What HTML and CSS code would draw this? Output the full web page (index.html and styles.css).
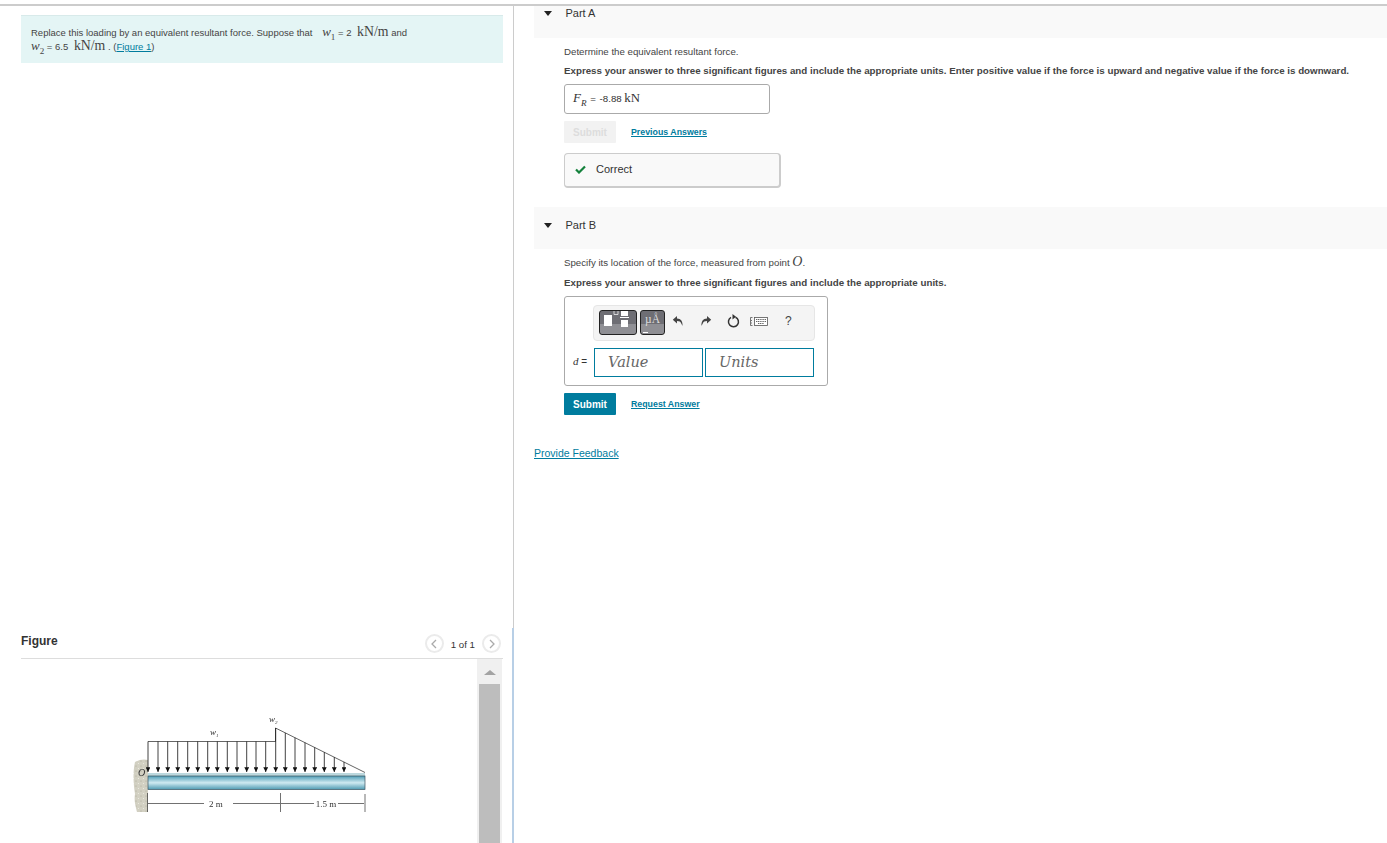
FILE: index.html
```html
<!DOCTYPE html>
<html lang="en">
<head>
    <meta charset="UTF-8">
    <title>Equivalent Resultant Force</title>
    <link rel="stylesheet" href="styles.css">
</head>
<body>
    <div class="page">
        <!-- Left column: problem text and figure -->
        <div class="left">
            <div class="intro">
                Replace this loading by an equivalent resultant force. Suppose that <i class="math math-gap">w<sub>1</sub></i> = 2 <span class="unit">kN/m</span> and<br>
                <i class="math">w<sub>2</sub></i> = 6.5 <span class="unit">kN/m</span> . (<a href="#">Figure 1</a>)
            </div>
            <div class="figure-head">
                <span class="figure-title">Figure</span>
                <div class="pager">
                    <span class="pager-btn">
                        <svg width="8" height="10" viewBox="0 0 8 10"><path d="M6 1 2 5l4 4" fill="none" stroke="#aaa" stroke-width="1.3"/></svg>
                    </span>
                    <span class="pager-text">1 of 1</span>
                    <span class="pager-btn">
                        <svg width="8" height="10" viewBox="0 0 8 10"><path d="M2 1l4 4-4 4" fill="none" stroke="#aaa" stroke-width="1.3"/></svg>
                    </span>
                </div>
            </div>
            <div class="figure-body">
                <div class="figure-img">
                    <svg width="250" height="120" viewBox="0 0 250 120">
                        <defs>
                            <linearGradient id="beam" x1="0" y1="0" x2="0" y2="1">
                                <stop offset="0" stop-color="#4f9db6"/>
                                <stop offset="0.5" stop-color="#cfeaf1"/>
                                <stop offset="1" stop-color="#4f9bb3"/>
                            </linearGradient>
                            <marker id="tip" markerWidth="6" markerHeight="6" viewBox="0 0 4 4" refX="4" refY="2" orient="auto">
                                <path d="M0 0 4 2 0 4z" fill="#111"/>
                            </marker>
                            <pattern id="rock" width="5" height="5" patternUnits="userSpaceOnUse">
                                <rect width="5" height="5" fill="#d2d0c2"/>
                                <circle cx="1" cy="1" r="0.6" fill="#a9a797"/>
                                <circle cx="3.5" cy="3.5" r="0.6" fill="#efeee4"/>
                            </pattern>
                        </defs>
                        <path d="M15 62c5-3 10-3 13-2v52H17c-2-8-3-12-2-18-2-12-2-24 0-32z" fill="url(#rock)"/>
                        <rect x="28" y="73" width="217" height="3" fill="#bcd8de"/>
                        <rect x="28" y="76" width="217" height="13.5" fill="url(#beam)" stroke="#3c5560" stroke-width="0.7"/>
                        <path d="M28 41.5H155.5V28L245 72.5" fill="none" stroke="#222" stroke-width="0.7"/>
                        <g stroke="#111" stroke-width="0.8">
                            <line x1="28" y1="41.5" x2="28" y2="72" marker-end="url(#tip)"/>
                            <line x1="38" y1="41.5" x2="38" y2="72" marker-end="url(#tip)"/>
                            <line x1="47.7" y1="41.5" x2="47.7" y2="72" marker-end="url(#tip)"/>
                            <line x1="57.7" y1="41.5" x2="57.7" y2="72" marker-end="url(#tip)"/>
                            <line x1="67.7" y1="41.5" x2="67.7" y2="72" marker-end="url(#tip)"/>
                            <line x1="77.7" y1="41.5" x2="77.7" y2="72" marker-end="url(#tip)"/>
                            <line x1="87.7" y1="41.5" x2="87.7" y2="72" marker-end="url(#tip)"/>
                            <line x1="97.3" y1="41.5" x2="97.3" y2="72" marker-end="url(#tip)"/>
                            <line x1="107.3" y1="41.5" x2="107.3" y2="72" marker-end="url(#tip)"/>
                            <line x1="117" y1="41.5" x2="117" y2="72" marker-end="url(#tip)"/>
                            <line x1="126.7" y1="41.5" x2="126.7" y2="72" marker-end="url(#tip)"/>
                            <line x1="136" y1="41.5" x2="136" y2="72" marker-end="url(#tip)"/>
                            <line x1="145.7" y1="41.5" x2="145.7" y2="72" marker-end="url(#tip)"/>
                            <line x1="155.7" y1="28" x2="155.7" y2="72" marker-end="url(#tip)"/>
                            <line x1="165.3" y1="32.9" x2="165.3" y2="72" marker-end="url(#tip)"/>
                            <line x1="175" y1="37.7" x2="175" y2="72" marker-end="url(#tip)"/>
                            <line x1="185" y1="42.6" x2="185" y2="72" marker-end="url(#tip)"/>
                            <line x1="194.7" y1="47.4" x2="194.7" y2="72" marker-end="url(#tip)"/>
                            <line x1="204.3" y1="52.2" x2="204.3" y2="72" marker-end="url(#tip)"/>
                            <line x1="214.3" y1="57.1" x2="214.3" y2="72" marker-end="url(#tip)"/>
                            <line x1="224" y1="61.9" x2="224" y2="72" marker-end="url(#tip)"/>
                        </g>
                        <g stroke="#333" stroke-width="0.7" fill="none">
                            <path d="M27.5 93v19M160.5 93v19M245 94v18"/>
                            <path d="M28 103.5H84M113 103.5H160M161 103.5H194M218 103.5H244"/>
                        </g>
                        <g class="dia-text">
                            <text x="90" y="35" class="dia-var">w<tspan dy="2" font-size="5">1</tspan></text>
                            <text x="149" y="22" class="dia-var">w<tspan dy="2" font-size="5">2</tspan></text>
                            <text x="18" y="76" class="dia-o">O</text>
                            <text x="96" y="107" text-anchor="middle">2 m</text>
                            <text x="206" y="107" text-anchor="middle">1.5 m</text>
                        </g>
                    </svg>
                </div>
                <div class="scrollbar">
                    <div class="scroll-up"></div>
                    <div class="scroll-thumb"></div>
                </div>
            </div>
        </div>

        <!-- Right column: parts -->
        <div class="right">
            <div class="part-head part-head-a">
                <span class="caret"></span>
                <span class="part-title">Part A</span>
            </div>
            <div class="part-body">
                <p class="prompt">Determine the equivalent resultant force.</p>
                <p class="instr">Express your answer to three significant figures and include the appropriate units. Enter positive value if the force is upward and negative value if the force is downward.</p>
                <div class="answer-box">
                    <i class="math math-f">F<sub>R</sub></i> <span class="eq">=</span> -8.88 <span class="unit">kN</span>
                </div>
                <div class="actions">
                    <button class="btn btn-off">Submit</button>
                    <a href="#" class="action-link">Previous Answers</a>
                </div>
                <div class="correct">
                    <svg width="11" height="9" viewBox="0 0 11 9"><path d="M1 4.5 4 7.5 10 1.5" fill="none" stroke="#14813c" stroke-width="2.2"/></svg>
                    <span>Correct</span>
                </div>
            </div>

            <div class="part-head part-head-b">
                <span class="caret"></span>
                <span class="part-title">Part B</span>
            </div>
            <div class="part-body">
                <p class="prompt prompt-b">Specify its location of the force, measured from point <i class="math big">O</i>.</p>
                <p class="instr">Express your answer to three significant figures and include the appropriate units.</p>
                <div class="editor">
                    <div class="toolbar">
                        <span class="tool tool-wide">
                            <svg width="36" height="23" viewBox="0 0 36 23">
                                <rect x="4" y="4" width="8" height="11" fill="#fff"/>
                                <path d="M14 0v3.5h4V0" fill="none" stroke="#eee" stroke-width="0.8"/>
                                <rect x="21" y="0" width="7" height="5" fill="#fff"/>
                                <rect x="20" y="6" width="9" height="1" fill="#fff"/>
                                <rect x="21" y="9" width="7" height="7" fill="#fff"/>
                            </svg>
                        </span>
                        <span class="tool tool-unit">µÅ</span>
                        <svg class="icon icon-undo" width="12" height="12" viewBox="0 0 12 12"><path d="M5 1 .8 4.8 5 8.5V6c2.2 0 3.700.6 4.500 3 .6 1 .9 1.800 1 2 .4-4.600-1.500-7.400-5.500-7.500z" fill="#444"/></svg>
                        <svg class="icon icon-redo" width="12" height="12" viewBox="0 0 12 12"><path d="M7 1l4.200 3.800L7 8.500V6c-2.200 0-3.700.6-4.500 3-.6 1-.9 1.800-1 2C1.100 6.400 3 3.600 7 3.500z" fill="#444"/></svg>
                        <svg class="icon icon-reset" width="13" height="14" viewBox="0 0 13 14"><path d="M4 3.400a5 5 0 1 0 4.500-.2" fill="none" stroke="#333" stroke-width="1.5"/><path d="M5.500 0v5.500L9 2.700z" fill="#333"/></svg>
                        <svg class="icon icon-keys" width="18" height="9" viewBox="0 0 18 9">
                            <path d="M2.500.5H.5v8h2M1.500 3v1M1.500 5.500v1" fill="none" stroke="#555" stroke-width="0.8"/>
                            <rect x="4.5" y="0.5" width="13" height="8" fill="#fff" stroke="#555" stroke-width="0.8"/>
                            <path d="M6 2.500h10M6 4.500h10M8 6.500h6" stroke="#666" stroke-width="1.1" stroke-dasharray="1.2 .6"/>
                        </svg>
                        <span class="help">?</span>
                    </div>
                    <div class="input-row">
                        <span class="var"><i class="math">d</i> =</span>
                        <span class="field">Value</span>
                        <span class="field">Units</span>
                    </div>
                </div>
                <div class="actions actions-b">
                    <button class="btn btn-on">Submit</button>
                    <a href="#" class="action-link">Request Answer</a>
                </div>
            </div>
            <a href="#" class="feedback">Provide Feedback</a>
        </div>
    </div>
</body>
</html>
```

FILE: styles.css
```css
* {
    box-sizing: border-box;
}
html, body {
    margin: 0;
    height: 100%;
    overflow: hidden;
}
body {
    font-family: "Liberation Sans", Arial, sans-serif;
    font-size: 9.7px;
    color: #333;
    background-color: #fff;
    padding-top: 4px;
}
a {
    color: #007c9e;
    text-decoration: underline;
}
p {
    margin: 0;
}
sub {
    font-size: 70%;
    font-style: normal;
    line-height: 0;
}
.math {
    font-family: "Liberation Serif", serif;
    font-size: 13px;
}
.math.big {
    font-size: 14px;
}
.math-f sub {
    font-style: italic;
}
.unit {
    font-family: "Liberation Serif", serif;
    font-size: 12.8px;
}
.page {
    display: flex;
    height: 839px;
    border-top: 2px solid #ccc;
}

/* left column */
.left {
    width: 514px;
    flex-shrink: 0;
    padding: 9px 10px 0 21px;
    border-right: 1px solid #ccc;
    display: flex;
    flex-direction: column;
}
.intro {
    flex-shrink: 0;
    height: 48px;
    padding: 9px 10px 0;
    font-size: 9.5px;
    background-color: #e4f5f5;
    border-top: 1px solid #d8eaea;
    line-height: 13px;
    color: #444;
}
.math-gap {
    margin-left: 7px;
}
.intro .unit {
    margin-left: 3px;
    font-size: 13.8px;
}
.figure-head {
    flex-shrink: 0;
    display: flex;
    justify-content: space-between;
    align-items: flex-end;
    margin-top: 566px;
    height: 30px;
    padding-bottom: 5px;
    border-bottom: 1px solid #ddd;
}
.figure-title {
    margin-bottom: 5px;
    font-size: 12px;
    font-weight: bold;
    color: #333;
}
.pager {
    display: flex;
    align-items: center;
    gap: 7px;
    padding-right: 2px;
}
.pager-btn {
    width: 19px;
    height: 19px;
    border: 2px solid #ebebeb;
    border-radius: 50%;
    display: flex;
    align-items: center;
    justify-content: center;
}
.pager-text {
    padding-top: 2px;
    font-size: 9.7px;
}
.figure-body {
    display: flex;
    flex: 1;
    min-height: 0;
}
.figure-img {
    width: 456px;
    padding: 41px 0 0 99px;
}
.figure-img svg {
    filter: blur(0.4px);
}
.dia-text {
    font-family: "Liberation Serif", serif;
    font-size: 9px;
    fill: #333;
}
.dia-var {
    font-style: italic;
}
.dia-o {
    font-style: italic;
    font-size: 10px;
}
.scrollbar {
    width: 25px;
    padding: 0 2px;
    background-color: #f0f0f0;
}
.scroll-up {
    width: 0;
    height: 0;
    margin: 11px auto 9px;
    border-left: 6px solid transparent;
    border-right: 6px solid transparent;
    border-bottom: 5px solid #a3a3a3;
}
.scroll-thumb {
    height: 170px;
    background-color: #bdbdbd;
}

/* right column */
.right {
    flex: 1;
    padding-left: 20px;
    position: relative;
}
.right::before {
    content: "";
    position: absolute;
    left: -2px;
    top: 622px;
    bottom: 0;
    width: 2px;
    background-color: #b8cfe6;
}
.part-head {
    background-color: #f9f9f9;
    display: flex;
    padding-left: 10px;
    font-size: 11px;
    color: #333;
}
.part-head-a {
    height: 32px;
    padding-top: 1px;
}
.part-head-b {
    height: 42px;
    margin-top: 19px;
    padding-top: 12px;
}
.caret {
    width: 0;
    height: 0;
    margin-top: 4px;
    border-left: 4px solid transparent;
    border-right: 4px solid transparent;
    border-top: 5px solid #222;
}
.part-title {
    margin-left: 13.5px;
}
.part-body {
    padding-left: 30px;
}
.prompt {
    padding-top: 8px;
    height: 23px;
    line-height: 12px;
    color: #444;
}
.prompt-b {
    padding-top: 6px;
    height: 24px;
    line-height: 14px;
}
.instr {
    height: 23px;
    line-height: 16px;
    padding-top: 2px;
    font-size: 9.75px;
    font-weight: bold;
    color: #444;
}
.answer-box {
    width: 206px;
    height: 30px;
    padding: 0 8px;
    line-height: 26px;
    border: 1px solid #aaa;
    border-radius: 3px;
}
.eq {
    margin: 0 1px;
}
.actions {
    display: flex;
    align-items: center;
    gap: 15px;
    margin-top: 7px;
    height: 22px;
}
.action-link {
    font-weight: bold;
    font-size: 8.8px;
}
.btn {
    width: 52px;
    height: 22px;
    border: none;
    border-radius: 1px;
    padding: 0;
    font-family: inherit;
    font-size: 10px;
    font-weight: bold;
}
.btn-off {
    background-color: #f2f2f2;
    color: #ddd;
}
.btn-on {
    background-color: #007c9e;
    color: #fff;
}
.correct {
    display: flex;
    align-items: center;
    gap: 10px;
    width: 217px;
    height: 35px;
    margin-top: 10px;
    padding: 0 0 2px 10px;
    font-size: 11px;
    background-color: #f9f9f9;
    border: 1px solid #ccc;
    border-right-width: 2px;
    border-bottom-width: 2px;
    border-radius: 4px;
}
.editor {
    width: 264px;
    height: 90px;
    padding: 8px 0 0 8px;
    border: 1px solid #aaa;
    border-radius: 3px;
}
.toolbar {
    display: flex;
    align-items: center;
    width: 222px;
    height: 36px;
    margin-left: 20px;
    padding-left: 5px;
    background-color: #f4f4f4;
    border: 1px solid #e6e6e6;
    border-radius: 4px;
}
.tool {
    display: flex;
    justify-content: center;
    flex-shrink: 0;
    height: 25px;
    margin-top: -1px;
    border-radius: 3px;
    border: 1px solid #222;
    background: linear-gradient(#6e6e74 55%, #8f8f94 55%);
}
.tool-wide {
    width: 38px;
}
.tool-unit {
    position: relative;
    width: 25px;
    margin-left: 3px;
    font-family: "Liberation Serif", serif;
    font-size: 11.5px;
    line-height: 17px;
    color: #ddd;
}
.tool-unit::after {
    content: "";
    position: absolute;
    left: 2px;
    bottom: 1px;
    width: 5px;
    height: 1px;
    background-color: #fff;
}
.icon {
    flex-shrink: 0;
    margin-bottom: 4px;
}
.icon-undo {
    margin-left: 7px;
}
.icon-redo {
    margin-left: 16px;
}
.icon-reset {
    margin-left: 14.5px;
}
.icon-keys {
    margin-left: 10.5px;
}
.help {
    margin: 0 0 4px 17px;
    font-size: 12px;
    color: #444;
}
.input-row {
    display: flex;
    align-items: center;
    margin-top: 7px;
}
.var {
    width: 21px;
    padding-bottom: 4px;
    font-size: 10px;
}
.var .math {
    font-size: 11px;
}
.field {
    width: 109px;
    height: 29px;
    margin-right: 2px;
    padding-left: 13px;
    font-family: "DejaVu Serif", serif;
    font-style: italic;
    font-size: 14.5px;
    line-height: 27px;
    color: #666;
    border: 1px solid #007c9e;
}
.feedback {
    display: inline-block;
    margin-top: 32px;
    font-size: 10.5px;
}
```
